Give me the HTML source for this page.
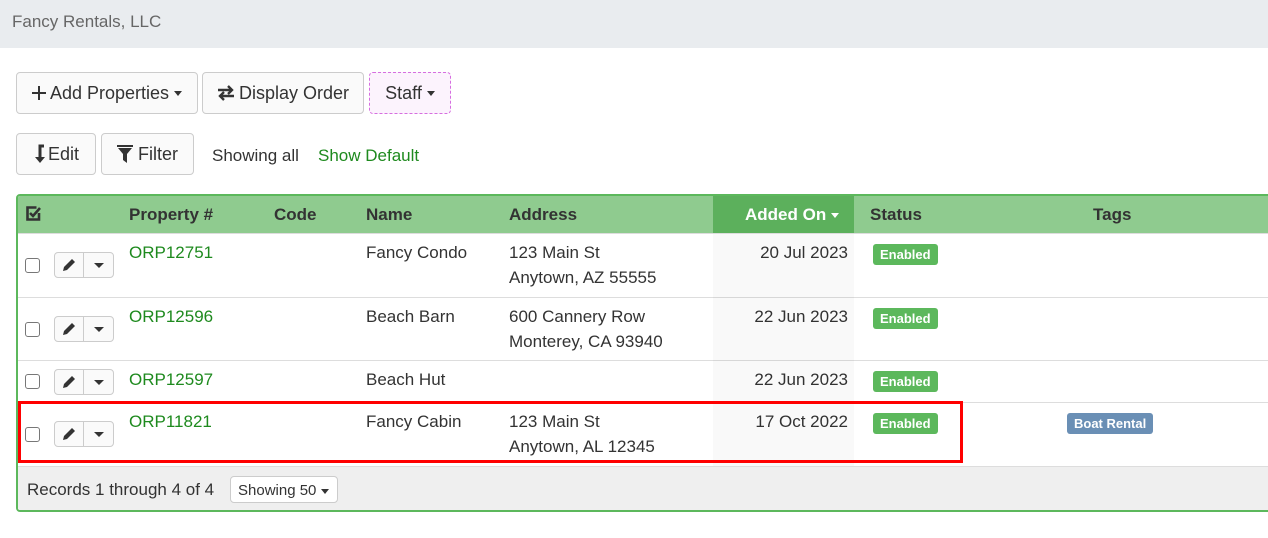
<!DOCTYPE html>
<html><head><style>
*{box-sizing:border-box;margin:0;padding:0}
body{width:1268px;height:538px;background:#fff;font-family:"Liberation Sans",sans-serif;font-size:17px;color:#333;position:relative;overflow:hidden}
.a{position:absolute}
.top{left:0;top:0;width:1268px;height:48px;background:#e9ecef;color:#666;font-size:17px;padding:12px 12px}
.btn{position:absolute;border:1px solid #ccc;border-radius:4px;background:#fafafa;height:42px;display:flex;align-items:center;justify-content:center;font-size:18px;color:#333}
.car{display:inline-block;border-left:4px solid transparent;border-right:4px solid transparent;border-top:5px solid #333;margin-left:5px;vertical-align:middle}
.tbl{left:16px;top:194px;width:1262px;height:318px;border:2px solid #5cb85c;border-radius:4px;overflow:hidden}
.hd{left:0;top:0;width:100%;height:38px;background:#8fcb8f}
.th{position:absolute;top:9px;font-weight:bold;font-size:17px;color:#333}
.row{position:absolute;left:0;width:100%;border-top:1px solid #ddd;background:#fff}
.cell{position:absolute;line-height:25px;font-size:17px}
.g{color:#1e8a1e}
.badge{position:absolute;background:#5cb85c;color:#fff;font-weight:bold;font-size:13px;padding:3px 7px;border-radius:3px}
.cb{position:absolute;left:7px;width:15px;height:15px;border:1px solid #777;border-radius:3px;background:#fff}
.eb{position:absolute;left:36px;width:60px;height:26px;border:1px solid #ccc;border-radius:4px;background:#fafafa}
.eb .sep{position:absolute;left:28px;top:0;width:1px;height:24px;background:#ccc}
.eb svg{position:absolute;left:7px;top:5px}
.eb .c{position:absolute;left:39px;top:10px;border-left:5px solid transparent;border-right:5px solid transparent;border-top:5px solid #333}
</style></head><body>
<div class="a top">Fancy Rentals, LLC</div>
<div class="btn" style="left:16px;top:72px;width:182px"><svg width="14" height="14" viewBox="0 0 14 14" style="margin-right:4px"><path d="M7 0v14M0 7h14" stroke="#333" stroke-width="2"/></svg>Add Properties<span class="car"></span></div>
<div class="btn" style="left:202px;top:72px;width:162px"><svg width="18" height="16" viewBox="0 0 18 16" style="margin-right:4px"><path d="M1 5h13M11 1l4 4-4 4M17 11H4M7 7l-4 4 4 4" stroke="#333" stroke-width="2.4" fill="none"/></svg>Display Order</div>
<div class="btn" style="left:369px;top:72px;width:82px;border:1px dashed #d66ee0;background:#fcf3fd">Staff<span class="car"></span></div>
<div class="btn" style="left:16px;top:133px;width:80px"><svg width="12" height="20" viewBox="0 0 12 20" style="margin-right:3px"><path d="M11 2H7v13" stroke="#333" stroke-width="3" fill="none"/><path d="M2 13h10l-5 6z" fill="#333"/></svg>Edit</div>
<div class="btn" style="left:101px;top:133px;width:93px"><svg width="16" height="18" viewBox="0 0 16 18" style="margin-right:5px"><path d="M0 0h16v2H0zM1 3h14l-5 6v9l-4-3V9z" fill="#333"/></svg>Filter</div>
<div class="a" style="left:212px;top:146px;font-size:17px">Showing all</div>
<div class="a g" style="left:318px;top:146px;font-size:17px">Show Default</div>
<div class="a tbl">
 <div class="a hd"></div>
 <div class="a" style="left:695px;top:0;width:141px;height:38px;background:#5cb05c"></div>
 <div class="a" style="left:695px;top:38px;width:141px;height:232px;background:#f9f9f9;z-index:1;mix-blend-mode:multiply"></div>
 <svg class="a" style="left:7px;top:9px" width="17" height="17" viewBox="0 0 17 17"><path d="M14 8v6.5H2.5V2.5h9" stroke="#333" stroke-width="2.6" fill="none"/><path d="M5 8l3 3 7-8" stroke="#333" stroke-width="2.6" fill="none"/></svg>
 <div class="th" style="left:111px">Property #</div>
 <div class="th" style="left:256px">Code</div>
 <div class="th" style="left:348px">Name</div>
 <div class="th" style="left:491px">Address</div>
 <div class="th" style="left:727px;color:#fff">Added On<span class="car" style="border-top-color:#fff"></span></div>
 <div class="th" style="left:852px">Status</div>
 <div class="th" style="left:1075px">Tags</div>

 <div class="row" style="top:37px;height:64px">
  <div class="cb" style="top:24px"></div><div class="eb" style="top:18px"><svg width="14" height="14" viewBox="0 0 14 14"><path d="M1 13l1-4 8-8 3 3-8 8z" fill="#333"/></svg><div class="sep"></div><div class="c"></div></div>
  <div class="cell g" style="left:111px;top:6px">ORP12751</div>
  <div class="cell" style="left:348px;top:6px">Fancy Condo</div>
  <div class="cell" style="left:491px;top:6px">123 Main St<br>Anytown, AZ 55555</div>
  <div class="cell" style="left:695px;width:135px;text-align:right;top:6px">20 Jul 2023</div>
  <div class="badge" style="left:855px;top:10px">Enabled</div>
 </div>
 <div class="row" style="top:101px;height:63px">
  <div class="cb" style="top:24px"></div><div class="eb" style="top:18px"><svg width="14" height="14" viewBox="0 0 14 14"><path d="M1 13l1-4 8-8 3 3-8 8z" fill="#333"/></svg><div class="sep"></div><div class="c"></div></div>
  <div class="cell g" style="left:111px;top:6px">ORP12596</div>
  <div class="cell" style="left:348px;top:6px">Beach Barn</div>
  <div class="cell" style="left:491px;top:6px">600 Cannery Row<br>Monterey, CA 93940</div>
  <div class="cell" style="left:695px;width:135px;text-align:right;top:6px">22 Jun 2023</div>
  <div class="badge" style="left:855px;top:10px">Enabled</div>
 </div>
 <div class="row" style="top:164px;height:42px">
  <div class="cb" style="top:13px"></div><div class="eb" style="top:8px"><svg width="14" height="14" viewBox="0 0 14 14"><path d="M1 13l1-4 8-8 3 3-8 8z" fill="#333"/></svg><div class="sep"></div><div class="c"></div></div>
  <div class="cell g" style="left:111px;top:6px">ORP12597</div>
  <div class="cell" style="left:348px;top:6px">Beach Hut</div>
  <div class="cell" style="left:695px;width:135px;text-align:right;top:6px">22 Jun 2023</div>
  <div class="badge" style="left:855px;top:10px">Enabled</div>
 </div>
 <div class="row" style="top:206px;height:64px">
  <div class="cb" style="top:24px"></div><div class="eb" style="top:18px"><svg width="14" height="14" viewBox="0 0 14 14"><path d="M1 13l1-4 8-8 3 3-8 8z" fill="#333"/></svg><div class="sep"></div><div class="c"></div></div>
  <div class="cell g" style="left:111px;top:6px">ORP11821</div>
  <div class="cell" style="left:348px;top:6px">Fancy Cabin</div>
  <div class="cell" style="left:491px;top:6px">123 Main St<br>Anytown, AL 12345</div>
  <div class="cell" style="left:695px;width:135px;text-align:right;top:6px">17 Oct 2022</div>
  <div class="badge" style="left:855px;top:10px">Enabled</div>
  <div class="badge" style="left:1049px;top:10px;background:#6a8fb5">Boat Rental</div>
 </div>
 <div class="row" style="top:270px;height:48px;background:#efefef">
  <div class="cell" style="left:9px;top:10px">Records 1 through 4 of 4</div>
  <div class="a" style="left:212px;top:9px;width:108px;height:27px;border:1px solid #ccc;border-radius:4px;background:#fff;font-size:15px;padding:5px 7px">Showing 50<span class="car"></span></div>
 </div>
</div>
<div class="a" style="left:18px;top:401px;width:945px;height:62px;border:3px solid #f00;z-index:5"></div>
</body></html>
